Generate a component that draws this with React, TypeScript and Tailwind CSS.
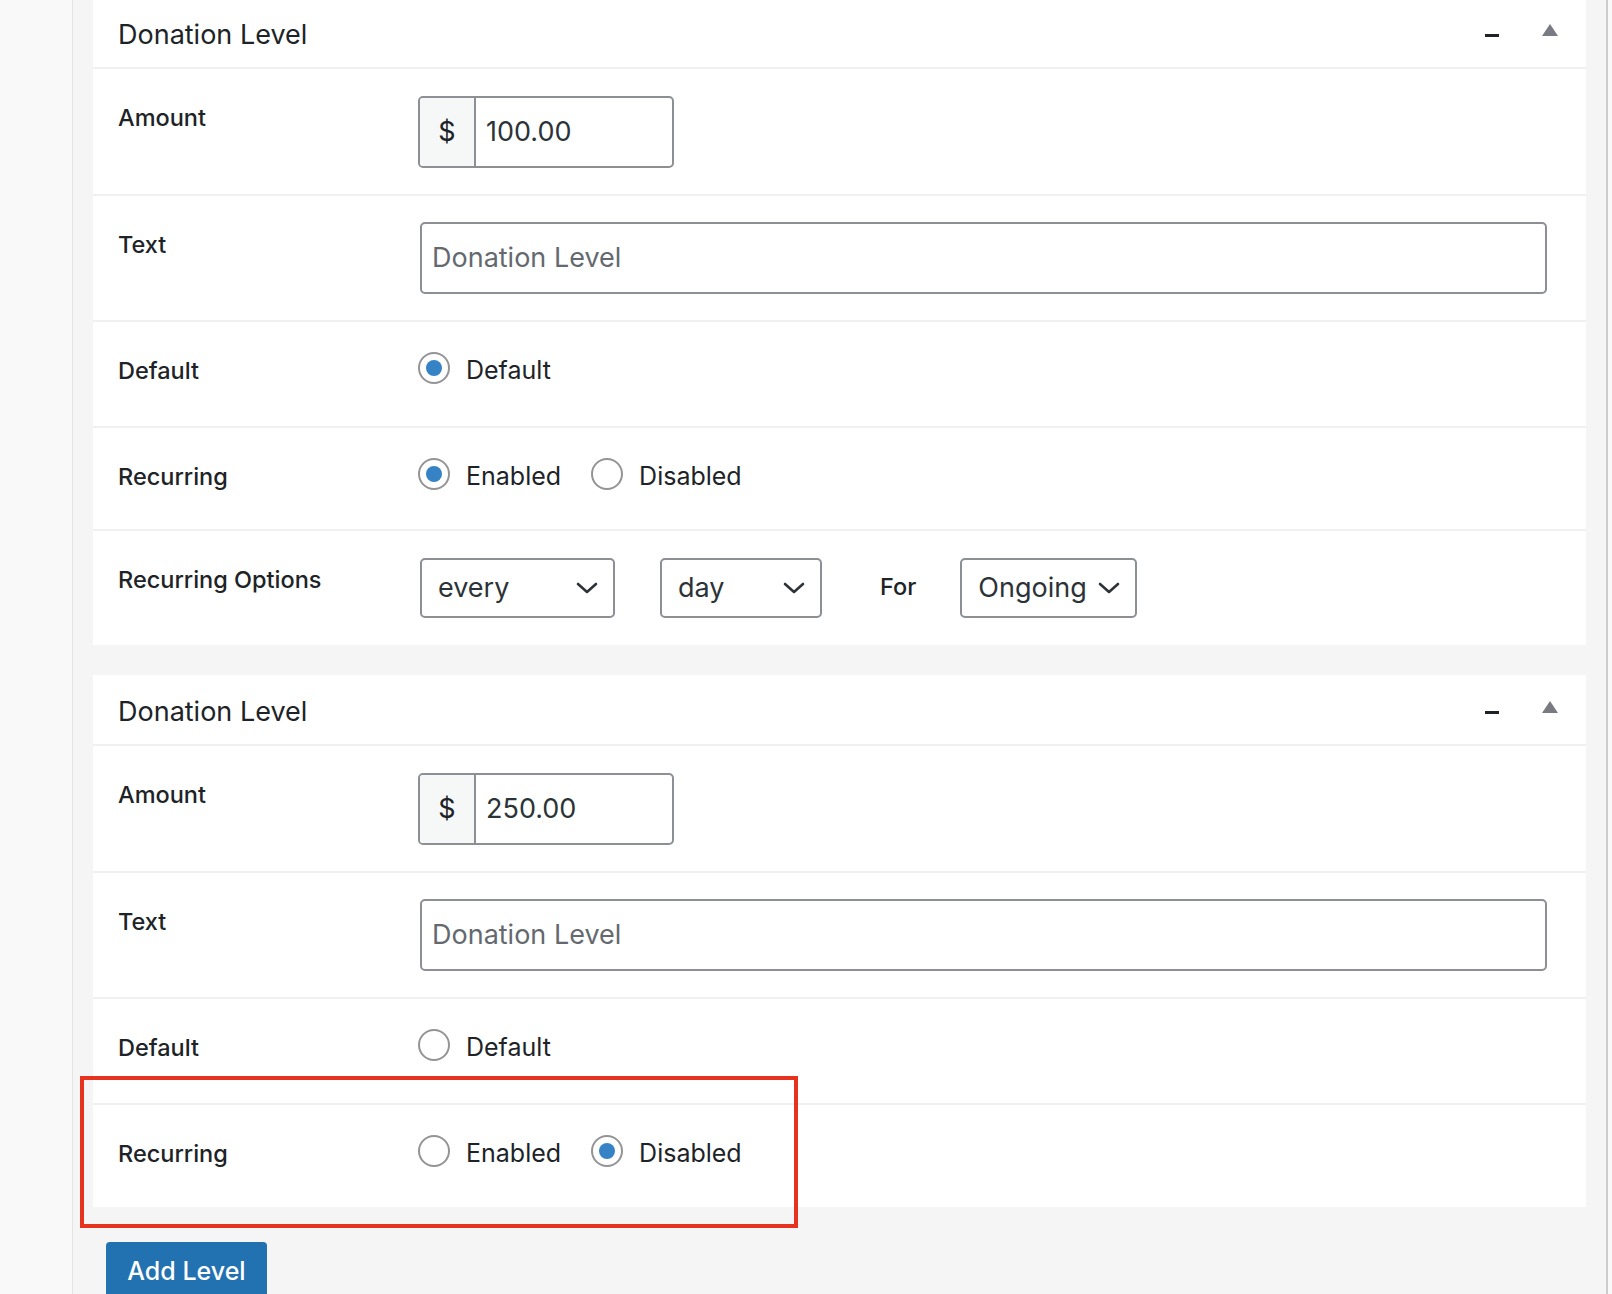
import React from 'react';

const font = "font-['Inter','Liberation_Sans',sans-serif]";

const Radio = ({ checked }: { checked?: boolean }) => (
  <span className="flex h-[32px] w-[32px] shrink-0 items-center justify-center rounded-full border-2 border-[#949494] bg-white">
    {checked && <span className="h-[16px] w-[16px] rounded-full bg-[#3582c4]" />}
  </span>
);

const RadioOption = ({ label, checked }: { label: string; checked?: boolean }) => (
  <label className="flex items-start gap-[16px]">
    <Radio checked={checked} />
    <span className="pt-[2px] text-[25px] leading-[32px] text-[#1d2327]">{label}</span>
  </label>
);

const Chevron = () => (
  <svg width="22" height="12" viewBox="0 0 22 12" className="shrink-0">
    <polyline points="2,2 11,10 20,2" fill="none" stroke="#2c3338" strokeWidth="2.6" strokeLinecap="round" strokeLinejoin="round" />
  </svg>
);

const Select = ({ value, className }: { value: string; className: string }) => (
  <div className={`flex h-[60px] items-center justify-between rounded-[5px] border-2 border-[#8c8f94] bg-white pl-[16px] pr-[15px] ${className}`}>
    <span className="text-[27px] text-[#2c3338]">{value}</span>
    <Chevron />
  </div>
);

const Row = ({
  label,
  className,
  contentClass,
  children,
}: {
  label: string;
  className: string;
  contentClass: string;
  children: React.ReactNode;
}) => (
  <div className={`flex pl-[25px] ${className}`}>
    <div className="w-[300px] shrink-0 pt-[35px] text-[23.5px] font-[450] leading-[28px] text-[#1d2327]">{label}</div>
    <div className={`flex-1 ${contentClass}`}>{children}</div>
  </div>
);

const AmountField = ({ value }: { value: string }) => (
  <div className="flex h-[72px] w-[256px] overflow-hidden rounded-[5px] border-2 border-[#8c8f94] bg-white">
    <div className="flex w-[56px] items-center justify-center border-r-2 border-[#8c8f94] bg-[#f6f7f7] text-[27px] text-[#1d2327]">$</div>
    <div className="flex items-center pl-[10px] text-[27px] text-[#2c3338]">{value}</div>
  </div>
);

const TextField = () => (
  <div className="ml-[2px] flex h-[72px] w-[1127px] items-center rounded-[5px] border-2 border-[#8c8f94] bg-white pl-[10px] text-[27px] text-[#646970]">
    Donation Level
  </div>
);

const Header = () => (
  <div className="flex h-[71px] items-center border-b-2 border-[#f0f0f1] pl-[25px] pr-[28px]">
    <span className="flex-1 pt-[6px] text-[27px] text-[#1d2327]">Donation Level</span>
    <span className="mt-[6px] h-[3px] w-[14px] bg-[#1d2327]" />
    <svg width="16" height="12" viewBox="0 0 16 12" className="mb-[6px] ml-[43px]">
      <polygon points="8,0 16,12 0,12" fill="#787c82" />
    </svg>
  </div>
);

const LevelCard = ({
  amount,
  isDefault,
  recurring,
  showOptions,
  className,
}: {
  amount: string;
  isDefault: boolean;
  recurring: boolean;
  showOptions: boolean;
  className: string;
}) => (
  <div className={`bg-white ${className}`}>
    <Header />
    <Row label="Amount" className="h-[127px] border-b-2 border-[#f0f0f1]" contentClass="pt-[27px]">
      <AmountField value={amount} />
    </Row>
    <Row label="Text" className="h-[126px] border-b-2 border-[#f0f0f1]" contentClass="pt-[26px]">
      <TextField />
    </Row>
    <Row label="Default" className="h-[106px] border-b-2 border-[#f0f0f1]" contentClass="pt-[30px]">
      <RadioOption label="Default" checked={isDefault} />
    </Row>
    <Row
      label="Recurring"
      className={showOptions ? 'h-[103px] border-b-2 border-[#f0f0f1]' : 'h-[102px]'}
      contentClass="flex items-start gap-[30px] pt-[30px]"
    >
      <RadioOption label="Enabled" checked={recurring} />
      <RadioOption label="Disabled" checked={!recurring} />
    </Row>
    {showOptions && (
      <Row label="Recurring Options" className="h-[114px]" contentClass="flex items-center self-start pt-[27px]">
        <Select value="every" className="ml-[2px] w-[195px]" />
        <Select value="day" className="ml-[45px] w-[162px]" />
        <span className="ml-[58px] mb-[3px] text-[23.5px] font-[450] text-[#1d2327]">For</span>
        <Select value="Ongoing" className="ml-[44px] w-[177px] pr-[14px]" />
      </Row>
    )}
  </div>
);

export default function App() {
  return (
    <div className={`relative flex h-screen w-full overflow-hidden bg-[#f9f9f9] ${font}`}>
      <div className="w-[73px] shrink-0 border-r border-[#e4e4e4] bg-[#f9f9f9]" />
      <div className="flex-1 border-r-2 border-[#cccccc] bg-[#f5f5f5] px-[20px]">
        <LevelCard amount="100.00" isDefault recurring showOptions className="mt-[-2px]" />
        <LevelCard amount="250.00" isDefault={false} recurring={false} showOptions={false} className="mt-[30px]" />
        <button className="ml-[13px] mt-[35px] h-[60px] w-[161px] rounded-[4px] bg-[#2271b1] text-[25px] font-medium text-white">
          Add Level
        </button>
      </div>
      <div className="w-[4px] shrink-0 bg-[#f9f9f9]" />
      <div className="pointer-events-none absolute left-[80px] top-[1076px] h-[152px] w-[718px] border-4 border-[#e5331f]" />
    </div>
  );
}
